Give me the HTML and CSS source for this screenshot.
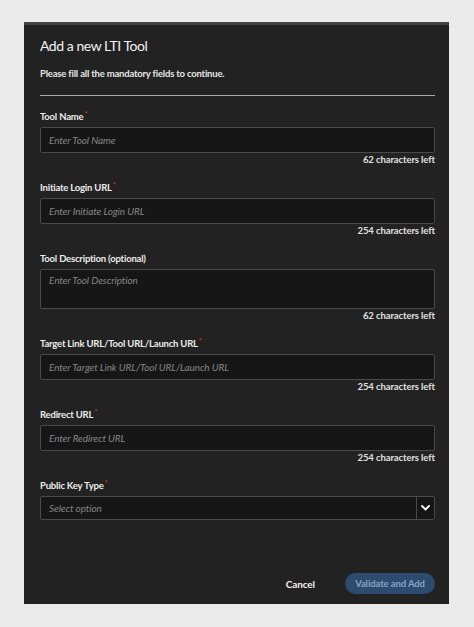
FILE: index.html
```html
<!DOCTYPE html>
<html>
<head>
<meta charset="utf-8">
<link rel="stylesheet" href="styles.css">
</head>
<body>
<div class="page">
  <div class="dialog">
    <h1 class="title">Add a new LTI Tool</h1>
    <p class="subtitle">Please fill all the mandatory fields to continue.</p>
    <hr class="divider">

    <div class="field">
      <label class="label">Tool Name<span class="req">*</span></label>
      <div class="input"><span class="ph">Enter Tool Name</span></div>
      <div class="counter">62 characters left</div>
    </div>

    <div class="field">
      <label class="label">Initiate Login URL<span class="req">*</span></label>
      <div class="input"><span class="ph">Enter Initiate Login URL</span></div>
      <div class="counter">254 characters left</div>
    </div>

    <div class="field">
      <label class="label">Tool Description (optional)</label>
      <div class="input textarea"><span class="ph">Enter Tool Description</span></div>
      <div class="counter">62 characters left</div>
    </div>

    <div class="field">
      <label class="label">Target Link URL/Tool URL/Launch URL<span class="req">*</span></label>
      <div class="input"><span class="ph">Enter Target Link URL/Tool URL/Launch URL</span></div>
      <div class="counter">254 characters left</div>
    </div>

    <div class="field">
      <label class="label">Redirect URL<span class="req">*</span></label>
      <div class="input"><span class="ph">Enter Redirect URL</span></div>
      <div class="counter">254 characters left</div>
    </div>

    <div class="field">
      <label class="label">Public Key Type<span class="req">*</span></label>
      <div class="select">
        <span class="ph sel-ph">Select option</span>
        <span class="chev"><svg width="9" height="6" viewBox="0 0 9 6"><polyline points="1,1 4.5,4.5 8,1" fill="none" stroke="#ffffff" stroke-width="1.8" stroke-linecap="round" stroke-linejoin="round"/></svg></span>
      </div>
    </div>

    <div class="footer">
      <button class="btn-cancel">Cancel</button>
      <button class="btn-primary">Validate and Add</button>
    </div>
  </div>
</div>
</body>
</html>
```

FILE: styles.css
```css
* { box-sizing: border-box; }
html, body {
  margin: 0;
  padding: 0;
  background: #ebebeb;
  font-family: Lato, "Open Sans", sans-serif;
}
.page {
  width: 474px;
  height: 627px;
  padding: 22px 25px 0 24px;
}
.dialog {
  width: 425px;
  height: 582px;
  background: #222222;
  border-top: 3px solid #444444;
  padding: 11px 14px 10px 16px;
  display: flex;
  flex-direction: column;
}
.title {
  margin: 0;
  font-size: 14px;
  line-height: 20px;
  font-weight: 400;
  letter-spacing: -0.45px;
  color: #f2f2f2;
}
.subtitle {
  margin: 11px 0 0 0;
  font-size: 9.5px;
  line-height: 14px;
  font-weight: 700;
  letter-spacing: -0.2px;
  color: #e6e6e6;
}
.divider {
  margin: 14px 0 0 0;
  border: 0;
  border-top: 1px solid #a8a8a8;
  height: 0;
}
.field {
  display: flex;
  flex-direction: column;
  margin-top: 14px;
}
.field + .field { margin-top: 15px; }
.label {
  font-size: 9.5px;
  line-height: 14px;
  font-weight: 700;
  letter-spacing: -0.2px;
  color: #ececec;
}
.req {
  color: #c8332e;
  font-size: 7.5px;
  vertical-align: top;
  line-height: 9px;
  margin-left: 1px;
}
.input {
  margin-top: 3px;
  height: 26px;
  background: #161616;
  border: 1px solid #4a4a4a;
  border-radius: 2px;
  padding: 0 8px;
  display: flex;
  align-items: center;
}
.textarea {
  height: 40px;
  align-items: flex-start;
  padding-top: 4px;
}
.ph {
  font-size: 10px;
  font-style: italic;
  letter-spacing: -0.1px;
  color: #858585;
}
.counter {
  align-self: flex-end;
  font-size: 9.5px;
  line-height: 13px;
  font-weight: 700;
  letter-spacing: -0.1px;
  color: #e0e0e0;
}
.select {
  margin-top: 3px;
  height: 24px;
  background: #161616;
  border: 1px solid #4a4a4a;
  border-radius: 2px;
  display: flex;
  align-items: stretch;
}
.sel-ph {
  flex: 1;
  padding-left: 8px;
  display: flex;
  align-items: center;
}
.chev {
  width: 18px;
  border-left: 1px solid #4a4a4a;
  display: flex;
  align-items: center;
  justify-content: center;
}
.footer {
  margin-top: auto;
  display: flex;
  justify-content: flex-end;
  align-items: center;
  gap: 30px;
}
.btn-cancel {
  background: none;
  border: 0;
  font-family: inherit;
  font-size: 10px;
  font-weight: 700;
  letter-spacing: -0.1px;
  color: #f0f0f0;
  padding: 0;
}
.btn-primary {
  width: 90px;
  height: 21px;
  border: 0;
  border-radius: 11px;
  background: #2d4a6f;
  color: #8aa2c2;
  font-family: inherit;
  font-size: 9.5px;
  font-weight: 700;
  letter-spacing: -0.1px;
  padding: 0;
}
```
